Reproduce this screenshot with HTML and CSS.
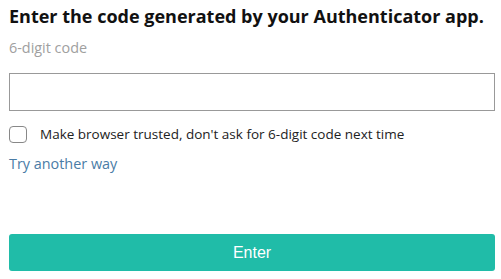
FILE: index.html
```html
<!DOCTYPE html>
<html lang="en">
<head>
  <meta charset="UTF-8">
  <meta name="viewport" content="width=device-width, initial-scale=1.0">
  <title>Two-step verification</title>
  <link rel="stylesheet" href="styles.css">
</head>
<body>

  <form class="verify-form" onsubmit="return false">
    <h1 class="title">Enter the code generated by your Authenticator app.</h1>

    <label class="field-label" for="code">6-digit code</label>
    <input type="text" id="code" class="code-input" maxlength="6" autocomplete="one-time-code">

    <label class="trust-row">
      <input type="checkbox" class="trust-check">
      <span class="box"></span>
      <span>Make browser trusted, don't ask for 6-digit code next time</span>
    </label>

    <a href="#" class="other-way">Try another way</a>

    <button type="submit" class="enter-button">Enter</button>
  </form>

</body>
</html>
```

FILE: styles.css
```css
body {
  font-family: "Open Sans", sans-serif;
  background: #fff;
  color: #222;
  margin: 0;
  padding: 0;
}

.verify-form {
  display: flex;
  flex-direction: column;
  padding: 4px 6px 0 9px;
}

.title {
  font-size: 18px;
  font-weight: 700;
  color: #111;
  margin: 0;
  line-height: 24px;
  white-space: nowrap;
}

.field-label {
  font-size: 14.4px;
  color: #a0a0a0;
  margin-top: 10px;
  line-height: 20px;
}

.code-input {
  height: 38px;
  box-sizing: border-box;
  margin-top: 15px;
  border: 1px solid #999;
  border-radius: 0;
  padding: 0 10px;
  font-size: 16px;
  font-family: inherit;
  outline: none;
}

.trust-row {
  display: flex;
  align-items: center;
  gap: 13px;
  margin-top: 13px;
  font-size: 13.5px;
  line-height: 20px;
  cursor: pointer;
}

.trust-check {
  display: none;
}

.box {
  width: 16px;
  height: 15px;
  border: 1px solid #888;
  border-radius: 4px;
  flex-shrink: 0;
}

.other-way {
  margin-top: 10px;
  font-size: 14.4px;
  line-height: 20px;
  color: #4a7ca6;
  text-decoration: none;
  align-self: flex-start;
}

.enter-button {
  margin-top: 60px;
  height: 37px;
  border: none;
  border-radius: 3px;
  background: #20bca8;
  color: white;
  font-family: "Liberation Sans", Arial, sans-serif;
  font-size: 16px;
  cursor: pointer;
}
```
